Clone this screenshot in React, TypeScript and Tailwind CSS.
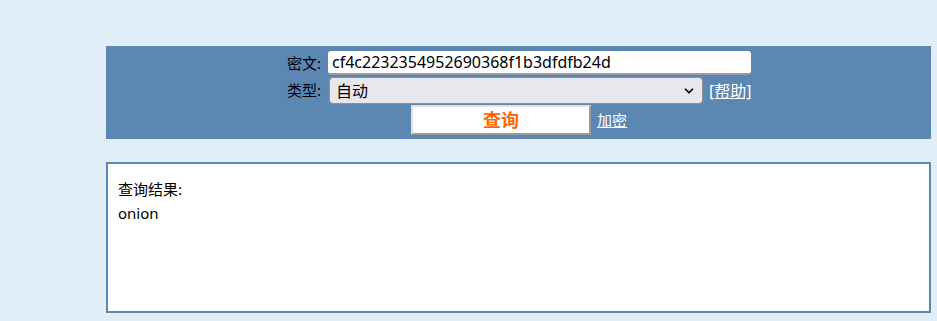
import { ChevronDown } from "lucide-react";

const font = { fontFamily: '"Noto Sans", "Noto Sans CJK SC", sans-serif' };

export default function App() {
  return (
    <div
      className="w-[937px] h-[321px] overflow-hidden bg-[#e1eef7] text-black"
      style={font}
    >
      {/* query form */}
      <div className="ml-[106px] mt-[46px] w-[825px] h-[93px] bg-[#5b87b2] pt-[5px] flex flex-col">
        <div className="flex items-center h-[24px]">
          <span className="w-[215px] text-right text-[15px] leading-none">密文:</span>
          <input
            readOnly
            value="cf4c2232354952690368f1b3dfdfb24d"
            className="ml-[7px] w-[423px] h-[24px] bg-white rounded-[3px] border-b-[2px] border-[#9a9aa5] px-[4px] text-[16px] leading-none outline-none"
            style={font}
          />
        </div>
        <div className="flex items-center h-[27px] mt-[2px]">
          <span className="w-[215px] text-right text-[15px] leading-none">类型:</span>
          <div className="ml-[8px] w-[374px] h-[27px] bg-[#e8e7ec] rounded-[4px] border border-[#8f8f9d] flex items-center pl-[6px] pr-[6px]">
            <span className="text-[16px] leading-none flex-1">自动</span>
            <ChevronDown className="w-[14px] h-[14px]" strokeWidth={3} />
          </div>
          <a className="ml-[6px] text-[16px] leading-none text-white underline">[帮助]</a>
        </div>
        <div className="flex items-center h-[30px] mt-[1px] ml-[305px]">
          <button
            className="w-[180px] h-[30px] bg-white border-[2px] border-t-[#e2e2e2] border-l-[#e2e2e2] border-b-[#9a9a9a] border-r-[#9a9a9a] text-[#ff6600] font-bold text-[18px] leading-none"
            style={font}
          >
            查询
          </button>
          <a className="ml-[6px] text-[15px] leading-none text-white underline">加密</a>
        </div>
      </div>

      {/* result */}
      <div className="ml-[106px] mt-[23px] w-[825px] h-[151px] bg-white border-[2px] border-[#5b87b2] pl-[10px] pt-[13px] text-[15px] leading-[24px]">
        <div>查询结果:</div>
        <div>onion</div>
      </div>
    </div>
  );
}
